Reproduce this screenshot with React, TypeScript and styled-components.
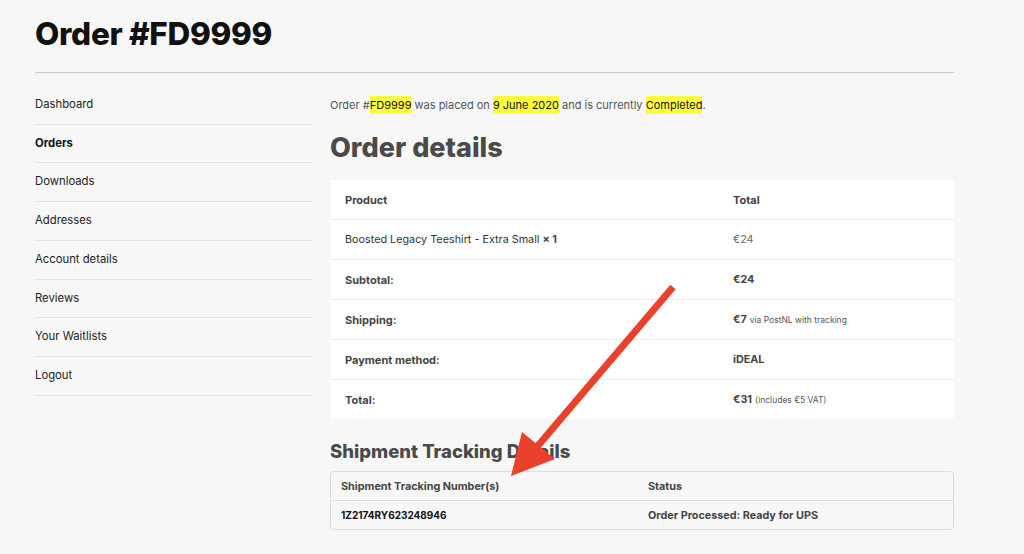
import styled, { createGlobalStyle } from 'styled-components';

const GlobalStyle = createGlobalStyle`
    html, body {
        margin: 0;
        background: #f7f7f7;
        font-family: Inter, "Liberation Sans", sans-serif;
        color: #222;
    }
`;

interface OrderLine {
    label: string
    value: React.ReactNode
}

const navItems = ['Dashboard', 'Orders', 'Downloads', 'Addresses', 'Account details', 'Reviews', 'Your Waitlists', 'Logout'];

const App: React.FunctionComponent = () => {
    const totals: OrderLine[] = [
        {label: 'Subtotal:', value: <strong>€24</strong>},
        {label: 'Shipping:', value: <><strong>€7</strong> <Small>via PostNL with tracking</Small></>},
        {label: 'Payment method:', value: <strong>iDEAL</strong>},
        {label: 'Total:', value: <><strong>€31</strong> <Small>(includes €5 VAT)</Small></>},
    ];

    return (
        <Page>
            <GlobalStyle/>
            <Title>Order #FD9999</Title>
            <Divider/>
            <Layout>
                <Sidebar>
                    {navItems.map((item) => (
                        <NavItem key={item} $active={item === 'Orders'}>{item}</NavItem>
                    ))}
                </Sidebar>
                <Main>
                    <Intro>
                        Order #<Mark>FD9999</Mark> was placed on <Mark>9 June 2020</Mark> and is currently <Mark>Completed</Mark>.
                    </Intro>
                    <SectionTitle>Order details</SectionTitle>
                    <DetailsTable>
                        <DetailsRow>
                            <Th>Product</Th>
                            <Th>Total</Th>
                        </DetailsRow>
                        <DetailsRow>
                            <Td>Boosted Legacy Teeshirt - Extra Small <strong>× 1</strong></Td>
                            <Td $muted>€24</Td>
                        </DetailsRow>
                        {totals.map((line) => (
                            <DetailsRow key={line.label}>
                                <Th>{line.label}</Th>
                                <Td>{line.value}</Td>
                            </DetailsRow>
                        ))}
                    </DetailsTable>
                    <SubTitle>Shipment Tracking Details</SubTitle>
                    <TrackingTable>
                        <TrackingRow $head>
                            <span>Shipment Tracking Number(s)</span>
                            <span>Status</span>
                        </TrackingRow>
                        <TrackingRow>
                            <TrackingNumber>1Z2174RY623248946</TrackingNumber>
                            <span>Order Processed: Ready for UPS</span>
                        </TrackingRow>
                    </TrackingTable>
                </Main>
            </Layout>
            {/* annotation arrow drawn over the screenshot */}
            <Arrow viewBox="0 0 1024 554" width="1024" height="554">
                <line x1="673" y1="287" x2="536" y2="448" stroke="#e9412b" strokeWidth="7"/>
                <polygon points="511,476 522,432 555,459" fill="#e9412b"/>
            </Arrow>
        </Page>
    );
}

const Page = styled.div`
    position: relative;
    width: 1024px;
    height: 554px;
    overflow: hidden;
    box-sizing: border-box;
    padding: 14px 70px 0 35px;
`;

const Title = styled.h1`
    margin: 0;
    font-size: 31.5px;
    line-height: 40px;
    font-weight: 800;
    letter-spacing: -0.3px;
    color: #111;
`;

const Divider = styled.hr`
    margin: 18px 0 0;
    border: 0;
    border-top: 1px solid #c9c9c9;
`;

const Layout = styled.div`
    display: grid;
    grid-template-columns: 277px 1fr;
    gap: 18px;
    padding-top: 13px;
`;

const Sidebar = styled.nav`
    display: flex;
    flex-direction: column;
`;

const NavItem = styled.div<{ $active?: boolean }>`
    font-size: 11.3px;
    line-height: 37.7px;
    border-bottom: 1px solid #e3e3e3;
    color: ${({$active}) => $active ? '#111' : '#222'};
    font-weight: ${({$active}) => $active ? 700 : 400};
`;

const Main = styled.div`
    display: flex;
    flex-direction: column;
`;

const Intro = styled.p`
    margin: 0;
    font-size: 11px;
    line-height: 38px;
    color: #555;
`;

const Mark = styled.mark`
    background: #fdfd3e;
    color: #111;
    padding: 2px 0;
`;

const SectionTitle = styled.h2`
    margin: 7px 0 15px;
    font-size: 27px;
    line-height: 34px;
    font-weight: 800;
    color: #4a4a4a;
`;

const DetailsTable = styled.div`
    background: #fff;
    display: flex;
    flex-direction: column;
`;

const DetailsRow = styled.div`
    display: grid;
    grid-template-columns: 388px 1fr;
    height: 39px;
    align-items: center;
    padding-left: 15px;
    & + & {
        border-top: 1px solid #ececec;
    }
`;

const Th = styled.div`
    font-size: 11px;
    font-weight: 700;
    color: #444;
`;

const Td = styled.div<{ $muted?: boolean }>`
    font-size: 10.8px;
    color: ${({$muted}) => $muted ? '#666' : '#333'};
    strong {
        font-weight: 700;
        color: #444;
    }
`;

const Small = styled.span`
    font-size: 8.5px;
    color: #555;
`;

const SubTitle = styled.h3`
    margin: 21px 0 8px;
    font-size: 18.5px;
    line-height: 23px;
    font-weight: 800;
    color: #4a4a4a;
`;

const TrackingTable = styled.div`
    border: 1px solid #dcdcdc;
    border-radius: 4px;
    display: flex;
    flex-direction: column;
`;

const TrackingRow = styled.div<{ $head?: boolean }>`
    display: grid;
    grid-template-columns: 307px 1fr;
    height: 28px;
    align-items: center;
    padding-left: 10px;
    font-size: 10.8px;
    font-weight: 700;
    color: #444;
    border-bottom: ${({$head}) => $head ? '1px solid #dcdcdc' : 'none'};
`;

const TrackingNumber = styled.span`
    font-size: 10px;
    color: #111;
`;

const Arrow = styled.svg`
    position: absolute;
    top: 0;
    left: 0;
    pointer-events: none;
`;

export default App;
